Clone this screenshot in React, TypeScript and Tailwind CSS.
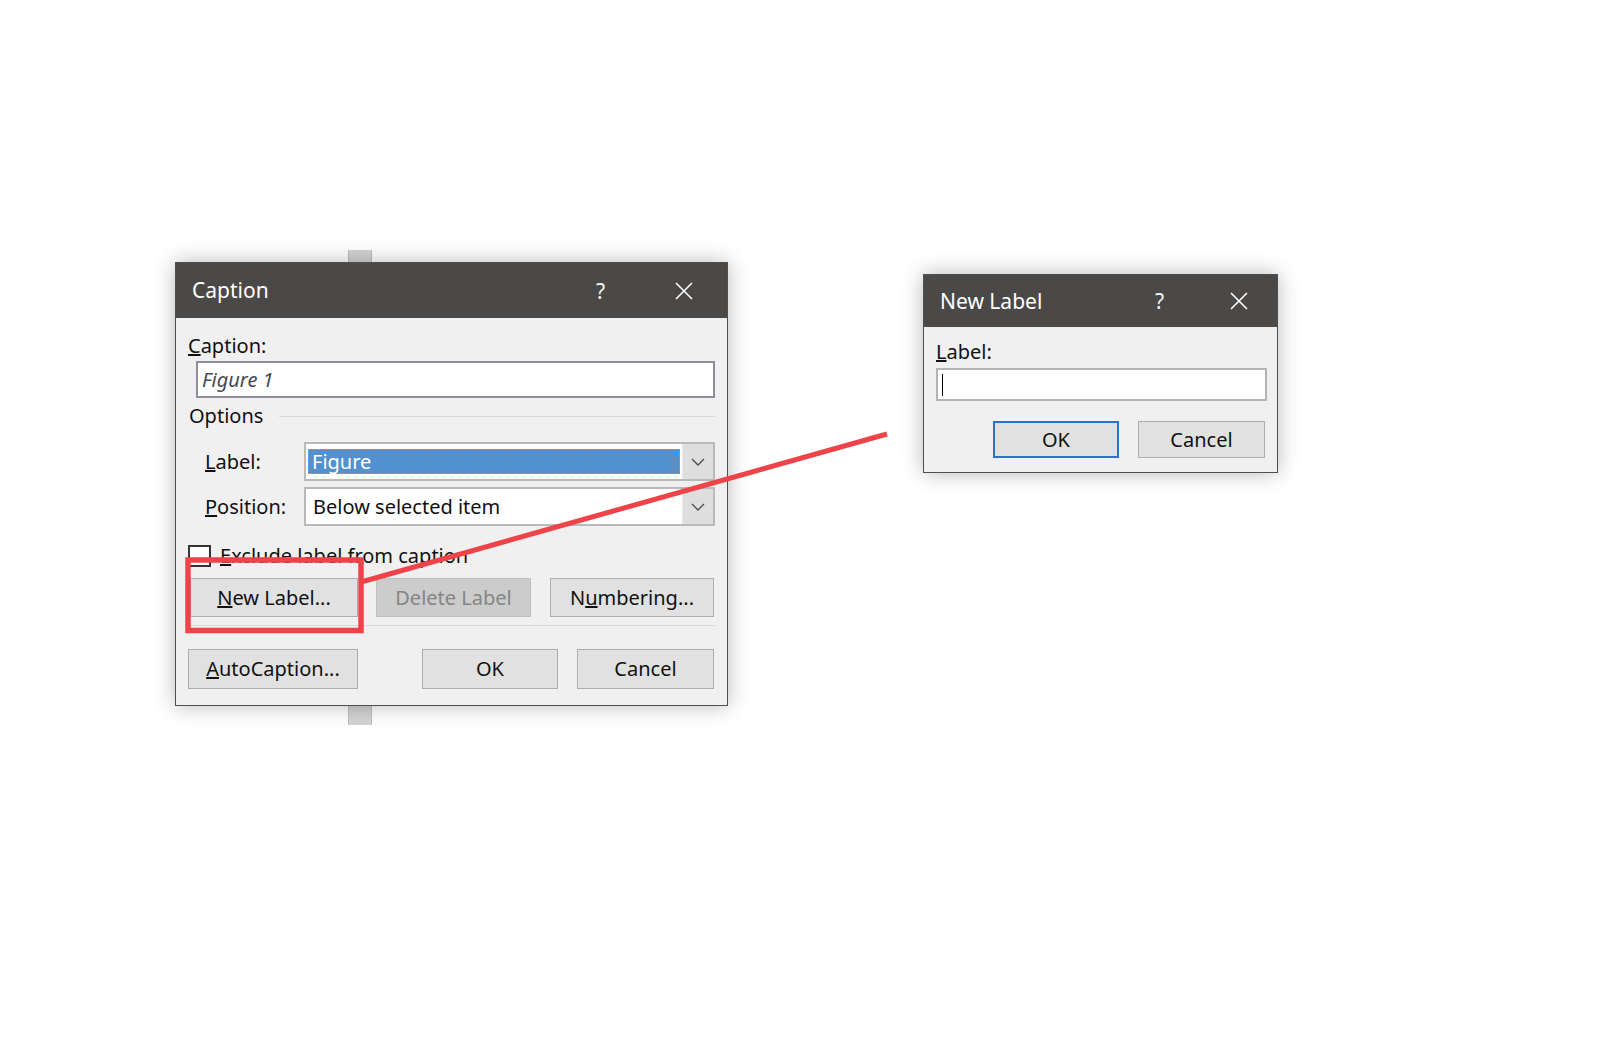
import React from "react";

const font = "font-['Noto_Sans','Open_Sans','Liberation_Sans',sans-serif]";

function CloseGlyph() {
  return (
    <svg width="20" height="20" viewBox="0 0 20 20" className="block">
      <path d="M2 2 L18 18 M18 2 L2 18" stroke="#ffffff" strokeWidth="1.6" fill="none" />
    </svg>
  );
}

function TitleBar({ title, height, helpX, closeX }: { title: string; height: string; helpX: string; closeX: string }) {
  return (
    <div className={`relative flex items-center bg-[#4b4947] text-white ${height}`}>
      <span className="pl-[16px] text-[21px] leading-none">{title}</span>
      <span className={`absolute top-1/2 -translate-y-1/2 text-[21px] leading-none text-[#f4f4f4] ${helpX}`}>?</span>
      <span className={`absolute top-1/2 -translate-y-1/2 ${closeX}`}>
        <CloseGlyph />
      </span>
    </div>
  );
}

function Btn({
  children,
  className = "",
  disabled = false,
  focused = false,
}: {
  children: React.ReactNode;
  className?: string;
  disabled?: boolean;
  focused?: boolean;
}) {
  const skin = disabled
    ? "border border-[#bfbfbf] bg-[#cccccc] text-[#858585]"
    : focused
    ? "border-2 border-[#2d72c8] bg-[#e1e1e1] text-[#111]"
    : "border border-[#adadad] bg-[#e1e1e1] text-[#111]";
  return <div className={`flex items-center justify-center text-[20px] leading-none ${skin} ${className}`}>{children}</div>;
}

function Chevron() {
  return (
    <svg width="14" height="8" viewBox="0 0 14 8" className="block">
      <polyline points="1,1 7,7 13,1" stroke="#4a4a4a" strokeWidth="1.3" fill="none" />
    </svg>
  );
}

function Combo({ children, selected = false }: { children: React.ReactNode; selected?: boolean }) {
  return (
    <div className="flex h-full w-[411px] border-2 border-[#b9b9b9] bg-white">
      <div className="flex flex-1 items-center px-[2px]">
        {selected ? (
          <div className="flex h-[25px] w-full items-center border border-dotted border-[#e08a55] bg-[#5290d0] pl-[3px] text-[20px] leading-none text-white">
            {children}
          </div>
        ) : (
          <span className="pl-[5px] text-[20px] leading-none text-[#111]">{children}</span>
        )}
      </div>
      <div className="flex w-[31px] items-center justify-center border-l border-[#e8e8e8] bg-[#dedede]">
        <Chevron />
      </div>
    </div>
  );
}

function CaptionDialog() {
  return (
    <div className="absolute left-[175px] top-[262px] flex h-[444px] w-[553px] flex-col border border-[#4f4f4f] bg-[#f0f0f0] shadow-[0_0_20px_rgba(0,0,0,0.28)]">
      <TitleBar title="Caption" height="h-[55px]" helpX="left-[420px]" closeX="left-[498px]" />

      <div className="mt-[16px] flex h-[24px] items-center pl-[12px] text-[20px] leading-none text-[#111]">
        <span>
          <u>C</u>aption:
        </span>
      </div>

      <div className="ml-[20px] mt-[3px] flex h-[37px] w-[519px] items-center border-2 border-[#8b8f97] bg-white pl-[4px]">
        <span className="text-[20px] italic leading-none text-[#444a55]">Figure 1</span>
      </div>

      <div className="mt-[6px] flex h-[24px] items-center pl-[13px] pr-[12px]">
        <span className="text-[20px] leading-none text-[#111]">Options</span>
        <div className="ml-[16px] h-px flex-1 bg-[#d9d9d9]" />
      </div>

      <div className="mt-[14px] flex h-[39px] items-center pl-[29px]">
        <span className="w-[99px] text-[20px] leading-none text-[#111]">
          <u>L</u>abel:
        </span>
        <div className="h-full">
          <Combo selected>Figure</Combo>
        </div>
      </div>

      <div className="mt-[6px] flex h-[39px] items-center pl-[29px]">
        <span className="w-[99px] text-[20px] leading-none text-[#111]">
          <u>P</u>osition:
        </span>
        <div className="h-full">
          <Combo>Below selected item</Combo>
        </div>
      </div>

      <div className="mt-[19px] flex h-[22px] items-center pl-[12px]">
        <div className="h-[22px] w-[23px] border-2 border-[#333] bg-white" />
        <span className="ml-[9px] text-[20px] leading-none text-[#111]">
          <u>E</u>xclude label from caption
        </span>
      </div>

      <div className="mt-[11px] flex h-[39px] pl-[14px]">
        <Btn className="w-[168px]">
          <span>
            <u>N</u>ew Label...
          </span>
        </Btn>
        <Btn className="ml-[18px] w-[155px]" disabled>
          Delete Label
        </Btn>
        <Btn className="ml-[19px] w-[164px]">
          <span>
            N<u>u</u>mbering...
          </span>
        </Btn>
      </div>

      <div className="ml-[12px] mr-[12px] mt-[8px] h-px bg-[#dadada]" />

      <div className="mt-[23px] flex h-[40px] pl-[12px]">
        <Btn className="w-[170px]">
          <span>
            <u>A</u>utoCaption...
          </span>
        </Btn>
        <Btn className="ml-[64px] w-[136px]">OK</Btn>
        <Btn className="ml-[19px] w-[137px]">Cancel</Btn>
      </div>
    </div>
  );
}

function NewLabelDialog() {
  return (
    <div className="absolute left-[923px] top-[274px] flex h-[199px] w-[355px] flex-col border border-[#4f4f4f] bg-[#f0f0f0] shadow-[0_0_20px_rgba(0,0,0,0.28)]">
      <TitleBar title="New Label" height="h-[52px]" helpX="left-[231px]" closeX="left-[305px]" />

      <div className="mt-[13px] flex h-[24px] items-center pl-[12px] text-[20px] leading-none text-[#111]">
        <span>
          <u>L</u>abel:
        </span>
      </div>

      <div className="ml-[12px] mt-[4px] flex h-[33px] w-[331px] items-center border-2 border-[#b4b4b4] bg-white pl-[4px]">
        <div className="h-[22px] w-px bg-black" />
      </div>

      <div className="mt-[20px] flex h-[37px] justify-end pr-[12px]">
        <Btn className="w-[126px]" focused>
          OK
        </Btn>
        <Btn className="ml-[19px] w-[127px]">Cancel</Btn>
      </div>
    </div>
  );
}

export default function App() {
  return (
    <div className={`relative h-[1047px] w-[1600px] overflow-hidden bg-white ${font}`}>
      {/* ruler tabs peeking out behind the Caption dialog */}
      <div className="absolute left-[348px] top-[250px] h-[14px] w-[24px] border-x border-[#bdbdbd] bg-[#d3d3d3]" />
      <div className="absolute left-[348px] top-[704px] h-[21px] w-[24px] border-x border-[#bdbdbd] bg-[#d3d3d3]" />

      <CaptionDialog />
      <NewLabelDialog />

      {/* callout: highlight box and connector line */}
      <svg className="pointer-events-none absolute left-0 top-0" width="1600" height="1047">
        <rect x="188" y="560" width="173" height="70.5" fill="none" stroke="#ee4349" strokeWidth="5.5" />
        <line x1="361" y1="582" x2="887" y2="434" stroke="#ee4349" strokeWidth="5" />
      </svg>
    </div>
  );
}
